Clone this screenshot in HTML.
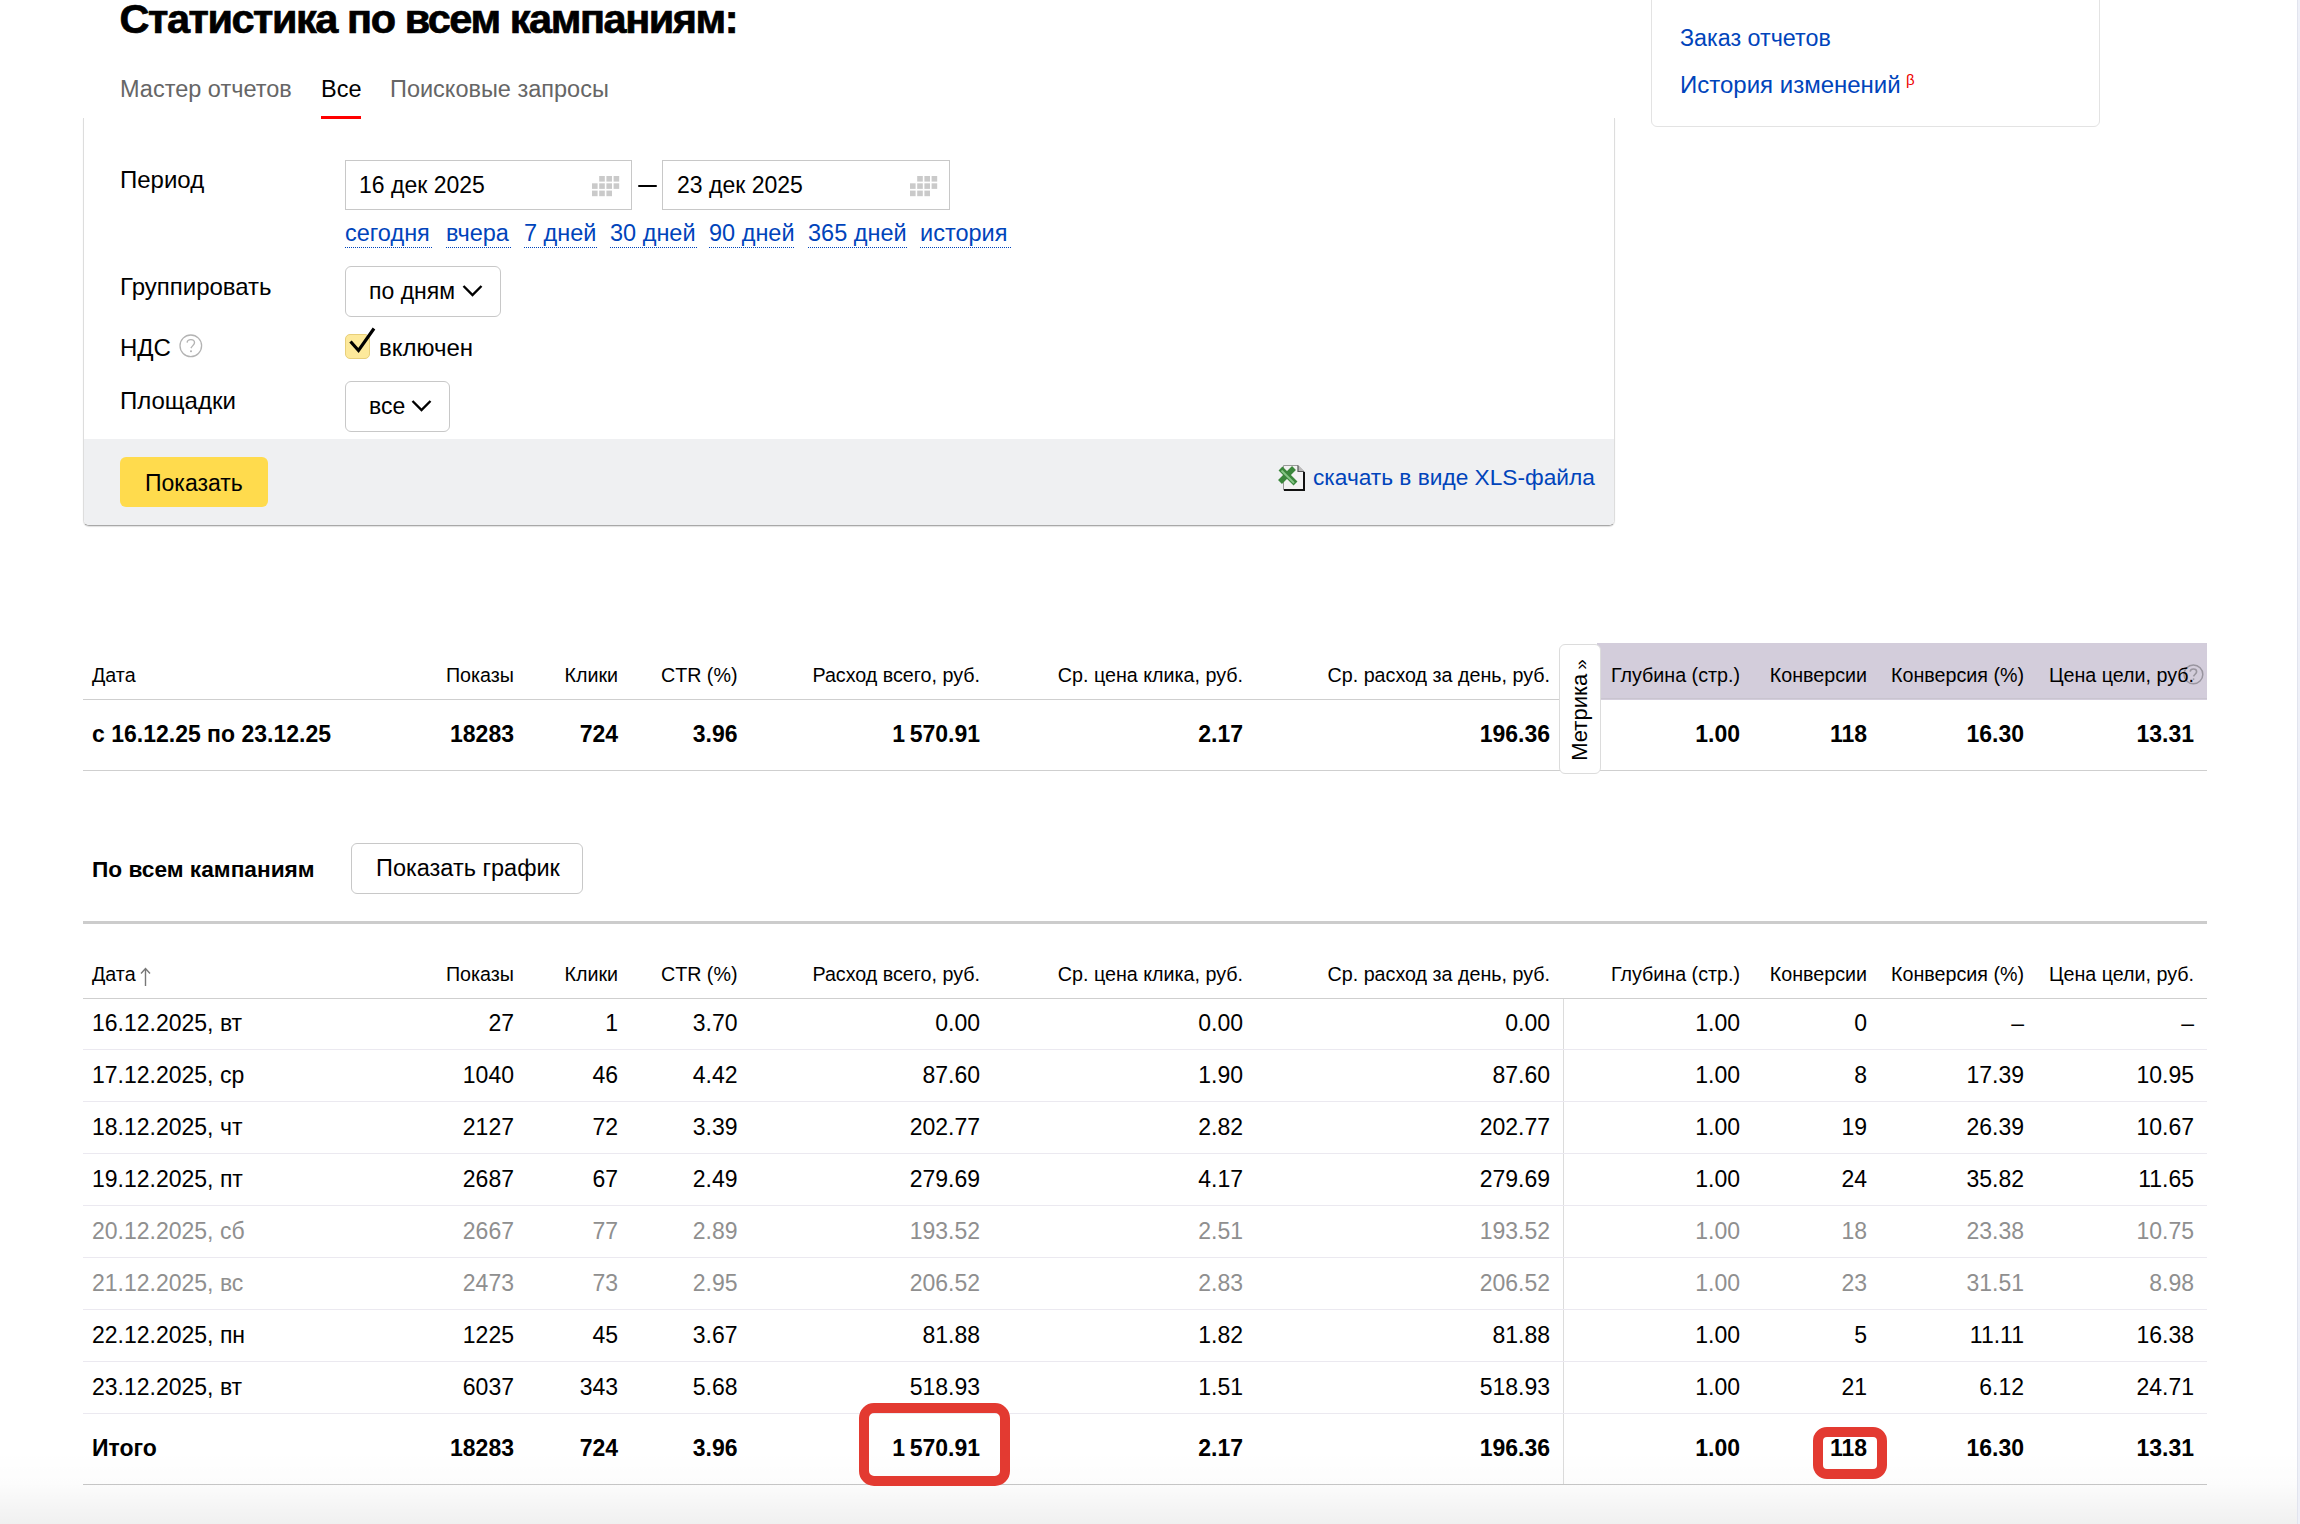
<!DOCTYPE html>
<html><head><meta charset="utf-8"><style>
html,body{margin:0;padding:0;background:#fff;}
body{width:2300px;height:1524px;position:relative;overflow:hidden;font-family:"Liberation Sans",sans-serif;color:#000;}
.t{position:absolute;white-space:nowrap;}
.b{position:absolute;}
</style></head><body>
<div class="t" style="top:-1.8px;font-size:41.5px;line-height:41.5px;left:119.5px;font-weight:bold;letter-spacing:-1.45px;-webkit-text-stroke:0.7px #000;">Статистика по всем кампаниям:</div>
<div class="t" style="top:77.9px;font-size:23.5px;line-height:23.5px;left:120px;color:#666;">Мастер отчетов</div>
<div class="t" style="top:77.9px;font-size:23.5px;line-height:23.5px;left:321px;">Все</div>
<div class="t" style="top:77.9px;font-size:23.5px;line-height:23.5px;left:390px;color:#666;">Поисковые запросы</div>
<div class="b" style="left:321px;top:116px;width:40px;height:3px;background:#f00;"></div>
<div class="b" style="left:1651px;top:-10px;width:449px;height:137px;border:1px solid #e3e3e3;border-radius:6px;box-sizing:border-box;background:#fff;"></div>
<div class="t" style="top:26.8px;font-size:23.3px;line-height:23.3px;left:1680px;color:#0044bb;">Заказ отчетов</div>
<div class="t" style="top:72.5px;font-size:24px;line-height:24px;left:1680px;color:#0044bb;">История изменений</div>
<div class="t" style="top:72.1px;font-size:15px;line-height:15px;left:1906px;color:#e00;">β</div>
<div class="b" style="left:83px;top:118px;width:1532px;height:408px;border-left:1px solid #ddd;border-right:1px solid #ddd;border-bottom:1px solid #a8a8a8;border-radius:0 0 6px 6px;box-sizing:border-box;box-shadow:0 1px 1px rgba(0,0,0,.12);"></div>
<div class="b" style="left:84px;top:439px;width:1530px;height:86px;background:#eff0f2;border-radius:0 0 5px 5px;"></div>
<div class="t" style="top:168.0px;font-size:24px;line-height:24px;left:120px;">Период</div>
<div class="b" style="left:345px;top:160px;width:287px;height:50px;border:1px solid #c8c8c8;box-sizing:border-box;background:#fff;"></div>
<div class="b" style="left:662px;top:160px;width:288px;height:50px;border:1px solid #c8c8c8;box-sizing:border-box;background:#fff;"></div>
<div class="t" style="top:174.3px;font-size:23px;line-height:23px;left:359px;">16 дек 2025</div>
<div class="t" style="top:174.3px;font-size:23px;line-height:23px;left:677px;">23 дек 2025</div>
<div class="b" style="left:638px;top:185px;width:19px;height:2px;background:#000;border-radius:1px;"></div>
<svg class="b" style="left:592px;top:176px" width="30" height="22"><rect x="7.2" y="0.0" width="5.6" height="5.6" fill="#cacaca"/><rect x="14.4" y="0.0" width="5.6" height="5.6" fill="#cacaca"/><rect x="21.6" y="0.0" width="5.6" height="5.6" fill="#cacaca"/><rect x="0.0" y="7.3" width="5.6" height="5.6" fill="#cacaca"/><rect x="7.2" y="7.3" width="5.6" height="5.6" fill="#cacaca"/><rect x="14.4" y="7.3" width="5.6" height="5.6" fill="#cacaca"/><rect x="21.6" y="7.3" width="5.6" height="5.6" fill="#cacaca"/><rect x="0.0" y="14.6" width="5.6" height="5.6" fill="#cacaca"/><rect x="7.2" y="14.6" width="5.6" height="5.6" fill="#cacaca"/><rect x="14.4" y="14.6" width="5.6" height="5.6" fill="#cacaca"/></svg>
<svg class="b" style="left:910px;top:176px" width="30" height="22"><rect x="7.2" y="0.0" width="5.6" height="5.6" fill="#cacaca"/><rect x="14.4" y="0.0" width="5.6" height="5.6" fill="#cacaca"/><rect x="21.6" y="0.0" width="5.6" height="5.6" fill="#cacaca"/><rect x="0.0" y="7.3" width="5.6" height="5.6" fill="#cacaca"/><rect x="7.2" y="7.3" width="5.6" height="5.6" fill="#cacaca"/><rect x="14.4" y="7.3" width="5.6" height="5.6" fill="#cacaca"/><rect x="21.6" y="7.3" width="5.6" height="5.6" fill="#cacaca"/><rect x="0.0" y="14.6" width="5.6" height="5.6" fill="#cacaca"/><rect x="7.2" y="14.6" width="5.6" height="5.6" fill="#cacaca"/><rect x="14.4" y="14.6" width="5.6" height="5.6" fill="#cacaca"/></svg>
<div class="t" style="top:221.7px;font-size:23.5px;line-height:23.5px;left:345px;color:#0044bb;">сегодня</div>
<div class="b" style="left:345px;top:247px;width:88px;height:1px;background-image:linear-gradient(90deg,#0044bb 50%,transparent 50%);background-size:2px 1px;background-repeat:repeat-x;"></div>
<div class="t" style="top:221.7px;font-size:23.5px;line-height:23.5px;left:446px;color:#0044bb;">вчера</div>
<div class="b" style="left:446px;top:247px;width:65px;height:1px;background-image:linear-gradient(90deg,#0044bb 50%,transparent 50%);background-size:2px 1px;background-repeat:repeat-x;"></div>
<div class="t" style="top:221.7px;font-size:23.5px;line-height:23.5px;left:524px;color:#0044bb;">7 дней</div>
<div class="b" style="left:524px;top:247px;width:73px;height:1px;background-image:linear-gradient(90deg,#0044bb 50%,transparent 50%);background-size:2px 1px;background-repeat:repeat-x;"></div>
<div class="t" style="top:221.7px;font-size:23.5px;line-height:23.5px;left:610px;color:#0044bb;">30 дней</div>
<div class="b" style="left:610px;top:247px;width:87px;height:1px;background-image:linear-gradient(90deg,#0044bb 50%,transparent 50%);background-size:2px 1px;background-repeat:repeat-x;"></div>
<div class="t" style="top:221.7px;font-size:23.5px;line-height:23.5px;left:709px;color:#0044bb;">90 дней</div>
<div class="b" style="left:709px;top:247px;width:86px;height:1px;background-image:linear-gradient(90deg,#0044bb 50%,transparent 50%);background-size:2px 1px;background-repeat:repeat-x;"></div>
<div class="t" style="top:221.7px;font-size:23.5px;line-height:23.5px;left:808px;color:#0044bb;">365 дней</div>
<div class="b" style="left:808px;top:247px;width:99px;height:1px;background-image:linear-gradient(90deg,#0044bb 50%,transparent 50%);background-size:2px 1px;background-repeat:repeat-x;"></div>
<div class="t" style="top:221.7px;font-size:23.5px;line-height:23.5px;left:920px;color:#0044bb;">история</div>
<div class="b" style="left:920px;top:247px;width:92px;height:1px;background-image:linear-gradient(90deg,#0044bb 50%,transparent 50%);background-size:2px 1px;background-repeat:repeat-x;"></div>
<div class="t" style="top:274.5px;font-size:24px;line-height:24px;left:120px;">Группировать</div>
<div class="b" style="left:345px;top:266px;width:156px;height:51px;border:1px solid #c8c8c8;border-radius:6px;box-sizing:border-box;background:#fff;"></div>
<div class="t" style="top:280.2px;font-size:23px;line-height:23px;left:369px;">по дням</div>
<svg class="b" style="left:462px;top:284px" width="22" height="14"><path d="M1.5 2 L10.5 11 L19.5 2" stroke="#000" stroke-width="2.4" fill="none"/></svg>
<div class="t" style="top:336.4px;font-size:24px;line-height:24px;left:120px;">НДС</div>
<svg class="b" style="left:177.60px;top:332.60px" width="25.60" height="25.60"><circle cx="12.80" cy="12.80" r="10.80" stroke="#b3b3b3" stroke-width="1.3" fill="none"/><path d="M9.10 9.60 C9.30 7.20 11.00 6.60 12.90 6.60 C15.10 6.60 16.50 7.90 16.50 9.70 C16.50 11.60 14.40 12.60 12.90 15.10" stroke="#b3b3b3" stroke-width="1.37" fill="none"/><circle cx="13.00" cy="18.20" r="1.05" fill="#b3b3b3"/></svg>
<div class="b" style="left:345px;top:334px;width:25px;height:25px;background:#fde99b;border:1px solid #e8cf7a;border-radius:5px;box-sizing:border-box;"></div>
<svg class="b" style="left:346px;top:325px" width="32" height="32"><path d="M4.5 16.5 L12.5 25.5 L28 3.5" stroke="#000" stroke-width="3.2" fill="none"/></svg>
<div class="t" style="top:335.9px;font-size:24px;line-height:24px;left:379px;">включен</div>
<div class="t" style="top:389.0px;font-size:24px;line-height:24px;left:120px;">Площадки</div>
<div class="b" style="left:345px;top:381px;width:105px;height:51px;border:1px solid #c8c8c8;border-radius:6px;box-sizing:border-box;background:#fff;"></div>
<div class="t" style="top:395.3px;font-size:23px;line-height:23px;left:369px;">все</div>
<svg class="b" style="left:411px;top:399px" width="22" height="14"><path d="M1.5 2 L10.5 11 L19.5 2" stroke="#000" stroke-width="2.4" fill="none"/></svg>
<div class="b" style="left:120px;top:457px;width:148px;height:50px;background:#ffdb4d;border-radius:6px;"></div>
<div class="t" style="top:471.6px;font-size:23px;line-height:23px;left:145px;">Показать</div>
<svg class="b" style="left:1277px;top:463px" width="30" height="30">
<path d="M6.5 2.5 H21 L27 8.5 V27 H6.5 Z" fill="#f2f2f2" stroke="#999" stroke-width="1"/>
<path d="M21 2.5 L21 8.5 L27 8.5" fill="#bbb" stroke="#555" stroke-width="1.2"/>
<path d="M7 27 H27 V9" stroke="#111" stroke-width="2" fill="none"/>
<path d="M3.5 5.5 L18.5 20.5" stroke="#3b873c" stroke-width="5.5"/>
<path d="M17 5 L3 19" stroke="#3b873c" stroke-width="5.5"/>
<path d="M4.5 7.5 L17 20" stroke="#86c686" stroke-width="1.8"/>
</svg>
<div class="t" style="top:465.7px;font-size:22.7px;line-height:22.7px;left:1313px;color:#0044bb;">скачать в виде XLS-файла</div>
<div class="b" style="left:1597px;top:643px;width:610px;height:57px;background:#d3cddb;"></div>
<div class="b" style="left:83px;top:699px;width:1476px;height:1px;background:#cfcfcf;"></div>
<div class="b" style="left:1597px;top:698px;width:610px;height:1px;background:#c9c4cf;"></div>
<div class="b" style="left:83px;top:770px;width:2124px;height:1px;background:#cfcfcf;"></div>
<svg class="b" style="left:2181.60px;top:662.90px" width="22.80" height="22.80"><circle cx="11.40" cy="11.40" r="9.40" stroke="#99959f" stroke-width="1.5" fill="none"/><path d="M8.18 8.61 C8.35 6.53 9.83 6.00 11.49 6.00 C13.40 6.00 14.62 7.14 14.62 8.70 C14.62 10.36 12.79 11.23 11.49 13.40" stroke="#99959f" stroke-width="1.58" fill="none"/><circle cx="11.57" cy="16.10" r="0.91" fill="#99959f"/></svg>
<div class="t" style="top:666.3px;font-size:19.7px;line-height:19.7px;left:92px;">Дата</div>
<div class="t" style="top:666.3px;font-size:19.7px;line-height:19.7px;right:1786px;">Показы</div>
<div class="t" style="top:666.3px;font-size:19.7px;line-height:19.7px;right:1682px;">Клики</div>
<div class="t" style="top:666.3px;font-size:19.7px;line-height:19.7px;right:1562.5px;">CTR (%)</div>
<div class="t" style="top:666.3px;font-size:19.7px;line-height:19.7px;right:1320px;">Расход всего, руб.</div>
<div class="t" style="top:666.3px;font-size:19.7px;line-height:19.7px;right:1057px;">Ср. цена клика, руб.</div>
<div class="t" style="top:666.3px;font-size:19.7px;line-height:19.7px;right:750px;">Ср. расход за день, руб.</div>
<div class="t" style="top:666.3px;font-size:19.7px;line-height:19.7px;right:560px;">Глубина (стр.)</div>
<div class="t" style="top:666.3px;font-size:19.7px;line-height:19.7px;right:433px;">Конверсии</div>
<div class="t" style="top:666.3px;font-size:19.7px;line-height:19.7px;right:276px;">Конверсия (%)</div>
<div class="t" style="top:666.3px;font-size:19.7px;line-height:19.7px;right:106px;">Цена цели, руб.</div>
<div class="t" style="top:722.9px;font-size:23px;line-height:23px;left:92px;font-weight:bold;">с 16.12.25 по 23.12.25</div>
<div class="t" style="top:722.9px;font-size:23px;line-height:23px;right:1786px;font-weight:bold;">18283</div>
<div class="t" style="top:722.9px;font-size:23px;line-height:23px;right:1682px;font-weight:bold;">724</div>
<div class="t" style="top:722.9px;font-size:23px;line-height:23px;right:1562.5px;font-weight:bold;">3.96</div>
<div class="t" style="top:722.9px;font-size:23px;line-height:23px;right:1320px;font-weight:bold;">1&#8239;570.91</div>
<div class="t" style="top:722.9px;font-size:23px;line-height:23px;right:1057px;font-weight:bold;">2.17</div>
<div class="t" style="top:722.9px;font-size:23px;line-height:23px;right:750px;font-weight:bold;">196.36</div>
<div class="t" style="top:722.9px;font-size:23px;line-height:23px;right:560px;font-weight:bold;">1.00</div>
<div class="t" style="top:722.9px;font-size:23px;line-height:23px;right:433px;font-weight:bold;">118</div>
<div class="t" style="top:722.9px;font-size:23px;line-height:23px;right:276px;font-weight:bold;">16.30</div>
<div class="t" style="top:722.9px;font-size:23px;line-height:23px;right:106px;font-weight:bold;">13.31</div>
<div class="b" style="left:1559px;top:644px;width:42px;height:130px;border:1px solid #dcdcdc;border-radius:6px;box-sizing:border-box;background:#fff;"></div>
<div class="t" style="left:1580px;top:710px;font-size:22px;line-height:22px;transform:translate(-50%,-50%) rotate(-90deg);">Метрика<span style="font-size:19px">&#8201;»</span></div>
<div class="t" style="top:857.9px;font-size:22.7px;line-height:22.7px;left:92px;font-weight:bold;">По всем кампаниям</div>
<div class="b" style="left:351px;top:843px;width:232px;height:51px;border:1px solid #c8c8c8;border-radius:6px;box-sizing:border-box;background:#fff;"></div>
<div class="t" style="top:857.2px;font-size:23.5px;line-height:23.5px;left:376px;">Показать график</div>
<div class="b" style="left:83px;top:921px;width:2124px;height:3px;background:#cccccc;"></div>
<div class="t" style="top:965.3px;font-size:19.7px;line-height:19.7px;left:92px;">Дата</div>
<svg class="b" style="left:139px;top:966px" width="14" height="22"><path d="M6.5 2.5 V20 M2 7.5 L6.5 2.5 L11 7.5" stroke="#777" stroke-width="1.4" fill="none"/></svg>
<div class="t" style="top:965.3px;font-size:19.7px;line-height:19.7px;right:1786px;">Показы</div>
<div class="t" style="top:965.3px;font-size:19.7px;line-height:19.7px;right:1682px;">Клики</div>
<div class="t" style="top:965.3px;font-size:19.7px;line-height:19.7px;right:1562.5px;">CTR (%)</div>
<div class="t" style="top:965.3px;font-size:19.7px;line-height:19.7px;right:1320px;">Расход всего, руб.</div>
<div class="t" style="top:965.3px;font-size:19.7px;line-height:19.7px;right:1057px;">Ср. цена клика, руб.</div>
<div class="t" style="top:965.3px;font-size:19.7px;line-height:19.7px;right:750px;">Ср. расход за день, руб.</div>
<div class="t" style="top:965.3px;font-size:19.7px;line-height:19.7px;right:560px;">Глубина (стр.)</div>
<div class="t" style="top:965.3px;font-size:19.7px;line-height:19.7px;right:433px;">Конверсии</div>
<div class="t" style="top:965.3px;font-size:19.7px;line-height:19.7px;right:276px;">Конверсия (%)</div>
<div class="t" style="top:965.3px;font-size:19.7px;line-height:19.7px;right:106px;">Цена цели, руб.</div>
<div class="b" style="left:83px;top:998px;width:2124px;height:1px;background:#cfcfcf;"></div>
<div class="b" style="left:1563px;top:999px;width:1px;height:485px;background:#dcdcdc;"></div>
<div class="t" style="top:1012.1px;font-size:23px;line-height:23px;left:92px;">16.12.2025, вт</div>
<div class="t" style="top:1012.1px;font-size:23px;line-height:23px;right:1786px;">27</div>
<div class="t" style="top:1012.1px;font-size:23px;line-height:23px;right:1682px;">1</div>
<div class="t" style="top:1012.1px;font-size:23px;line-height:23px;right:1562.5px;">3.70</div>
<div class="t" style="top:1012.1px;font-size:23px;line-height:23px;right:1320px;">0.00</div>
<div class="t" style="top:1012.1px;font-size:23px;line-height:23px;right:1057px;">0.00</div>
<div class="t" style="top:1012.1px;font-size:23px;line-height:23px;right:750px;">0.00</div>
<div class="t" style="top:1012.1px;font-size:23px;line-height:23px;right:560px;">1.00</div>
<div class="t" style="top:1012.1px;font-size:23px;line-height:23px;right:433px;">0</div>
<div class="t" style="top:1012.1px;font-size:23px;line-height:23px;right:276px;">–</div>
<div class="t" style="top:1012.1px;font-size:23px;line-height:23px;right:106px;">–</div>
<div class="b" style="left:83px;top:1049px;width:2124px;height:1px;background:#ebe9f0;"></div>
<div class="t" style="top:1064.1px;font-size:23px;line-height:23px;left:92px;">17.12.2025, ср</div>
<div class="t" style="top:1064.1px;font-size:23px;line-height:23px;right:1786px;">1040</div>
<div class="t" style="top:1064.1px;font-size:23px;line-height:23px;right:1682px;">46</div>
<div class="t" style="top:1064.1px;font-size:23px;line-height:23px;right:1562.5px;">4.42</div>
<div class="t" style="top:1064.1px;font-size:23px;line-height:23px;right:1320px;">87.60</div>
<div class="t" style="top:1064.1px;font-size:23px;line-height:23px;right:1057px;">1.90</div>
<div class="t" style="top:1064.1px;font-size:23px;line-height:23px;right:750px;">87.60</div>
<div class="t" style="top:1064.1px;font-size:23px;line-height:23px;right:560px;">1.00</div>
<div class="t" style="top:1064.1px;font-size:23px;line-height:23px;right:433px;">8</div>
<div class="t" style="top:1064.1px;font-size:23px;line-height:23px;right:276px;">17.39</div>
<div class="t" style="top:1064.1px;font-size:23px;line-height:23px;right:106px;">10.95</div>
<div class="b" style="left:83px;top:1101px;width:2124px;height:1px;background:#ebe9f0;"></div>
<div class="t" style="top:1116.1px;font-size:23px;line-height:23px;left:92px;">18.12.2025, чт</div>
<div class="t" style="top:1116.1px;font-size:23px;line-height:23px;right:1786px;">2127</div>
<div class="t" style="top:1116.1px;font-size:23px;line-height:23px;right:1682px;">72</div>
<div class="t" style="top:1116.1px;font-size:23px;line-height:23px;right:1562.5px;">3.39</div>
<div class="t" style="top:1116.1px;font-size:23px;line-height:23px;right:1320px;">202.77</div>
<div class="t" style="top:1116.1px;font-size:23px;line-height:23px;right:1057px;">2.82</div>
<div class="t" style="top:1116.1px;font-size:23px;line-height:23px;right:750px;">202.77</div>
<div class="t" style="top:1116.1px;font-size:23px;line-height:23px;right:560px;">1.00</div>
<div class="t" style="top:1116.1px;font-size:23px;line-height:23px;right:433px;">19</div>
<div class="t" style="top:1116.1px;font-size:23px;line-height:23px;right:276px;">26.39</div>
<div class="t" style="top:1116.1px;font-size:23px;line-height:23px;right:106px;">10.67</div>
<div class="b" style="left:83px;top:1153px;width:2124px;height:1px;background:#ebe9f0;"></div>
<div class="t" style="top:1168.1px;font-size:23px;line-height:23px;left:92px;">19.12.2025, пт</div>
<div class="t" style="top:1168.1px;font-size:23px;line-height:23px;right:1786px;">2687</div>
<div class="t" style="top:1168.1px;font-size:23px;line-height:23px;right:1682px;">67</div>
<div class="t" style="top:1168.1px;font-size:23px;line-height:23px;right:1562.5px;">2.49</div>
<div class="t" style="top:1168.1px;font-size:23px;line-height:23px;right:1320px;">279.69</div>
<div class="t" style="top:1168.1px;font-size:23px;line-height:23px;right:1057px;">4.17</div>
<div class="t" style="top:1168.1px;font-size:23px;line-height:23px;right:750px;">279.69</div>
<div class="t" style="top:1168.1px;font-size:23px;line-height:23px;right:560px;">1.00</div>
<div class="t" style="top:1168.1px;font-size:23px;line-height:23px;right:433px;">24</div>
<div class="t" style="top:1168.1px;font-size:23px;line-height:23px;right:276px;">35.82</div>
<div class="t" style="top:1168.1px;font-size:23px;line-height:23px;right:106px;">11.65</div>
<div class="b" style="left:83px;top:1205px;width:2124px;height:1px;background:#ebe9f0;"></div>
<div class="t" style="top:1220.1px;font-size:23px;line-height:23px;left:92px;color:#8f8f8f;">20.12.2025, сб</div>
<div class="t" style="top:1220.1px;font-size:23px;line-height:23px;right:1786px;color:#8f8f8f;">2667</div>
<div class="t" style="top:1220.1px;font-size:23px;line-height:23px;right:1682px;color:#8f8f8f;">77</div>
<div class="t" style="top:1220.1px;font-size:23px;line-height:23px;right:1562.5px;color:#8f8f8f;">2.89</div>
<div class="t" style="top:1220.1px;font-size:23px;line-height:23px;right:1320px;color:#8f8f8f;">193.52</div>
<div class="t" style="top:1220.1px;font-size:23px;line-height:23px;right:1057px;color:#8f8f8f;">2.51</div>
<div class="t" style="top:1220.1px;font-size:23px;line-height:23px;right:750px;color:#8f8f8f;">193.52</div>
<div class="t" style="top:1220.1px;font-size:23px;line-height:23px;right:560px;color:#8f8f8f;">1.00</div>
<div class="t" style="top:1220.1px;font-size:23px;line-height:23px;right:433px;color:#8f8f8f;">18</div>
<div class="t" style="top:1220.1px;font-size:23px;line-height:23px;right:276px;color:#8f8f8f;">23.38</div>
<div class="t" style="top:1220.1px;font-size:23px;line-height:23px;right:106px;color:#8f8f8f;">10.75</div>
<div class="b" style="left:83px;top:1257px;width:2124px;height:1px;background:#ebe9f0;"></div>
<div class="t" style="top:1272.1px;font-size:23px;line-height:23px;left:92px;color:#8f8f8f;">21.12.2025, вс</div>
<div class="t" style="top:1272.1px;font-size:23px;line-height:23px;right:1786px;color:#8f8f8f;">2473</div>
<div class="t" style="top:1272.1px;font-size:23px;line-height:23px;right:1682px;color:#8f8f8f;">73</div>
<div class="t" style="top:1272.1px;font-size:23px;line-height:23px;right:1562.5px;color:#8f8f8f;">2.95</div>
<div class="t" style="top:1272.1px;font-size:23px;line-height:23px;right:1320px;color:#8f8f8f;">206.52</div>
<div class="t" style="top:1272.1px;font-size:23px;line-height:23px;right:1057px;color:#8f8f8f;">2.83</div>
<div class="t" style="top:1272.1px;font-size:23px;line-height:23px;right:750px;color:#8f8f8f;">206.52</div>
<div class="t" style="top:1272.1px;font-size:23px;line-height:23px;right:560px;color:#8f8f8f;">1.00</div>
<div class="t" style="top:1272.1px;font-size:23px;line-height:23px;right:433px;color:#8f8f8f;">23</div>
<div class="t" style="top:1272.1px;font-size:23px;line-height:23px;right:276px;color:#8f8f8f;">31.51</div>
<div class="t" style="top:1272.1px;font-size:23px;line-height:23px;right:106px;color:#8f8f8f;">8.98</div>
<div class="b" style="left:83px;top:1309px;width:2124px;height:1px;background:#ebe9f0;"></div>
<div class="t" style="top:1324.1px;font-size:23px;line-height:23px;left:92px;">22.12.2025, пн</div>
<div class="t" style="top:1324.1px;font-size:23px;line-height:23px;right:1786px;">1225</div>
<div class="t" style="top:1324.1px;font-size:23px;line-height:23px;right:1682px;">45</div>
<div class="t" style="top:1324.1px;font-size:23px;line-height:23px;right:1562.5px;">3.67</div>
<div class="t" style="top:1324.1px;font-size:23px;line-height:23px;right:1320px;">81.88</div>
<div class="t" style="top:1324.1px;font-size:23px;line-height:23px;right:1057px;">1.82</div>
<div class="t" style="top:1324.1px;font-size:23px;line-height:23px;right:750px;">81.88</div>
<div class="t" style="top:1324.1px;font-size:23px;line-height:23px;right:560px;">1.00</div>
<div class="t" style="top:1324.1px;font-size:23px;line-height:23px;right:433px;">5</div>
<div class="t" style="top:1324.1px;font-size:23px;line-height:23px;right:276px;">11.11</div>
<div class="t" style="top:1324.1px;font-size:23px;line-height:23px;right:106px;">16.38</div>
<div class="b" style="left:83px;top:1361px;width:2124px;height:1px;background:#ebe9f0;"></div>
<div class="t" style="top:1376.1px;font-size:23px;line-height:23px;left:92px;">23.12.2025, вт</div>
<div class="t" style="top:1376.1px;font-size:23px;line-height:23px;right:1786px;">6037</div>
<div class="t" style="top:1376.1px;font-size:23px;line-height:23px;right:1682px;">343</div>
<div class="t" style="top:1376.1px;font-size:23px;line-height:23px;right:1562.5px;">5.68</div>
<div class="t" style="top:1376.1px;font-size:23px;line-height:23px;right:1320px;">518.93</div>
<div class="t" style="top:1376.1px;font-size:23px;line-height:23px;right:1057px;">1.51</div>
<div class="t" style="top:1376.1px;font-size:23px;line-height:23px;right:750px;">518.93</div>
<div class="t" style="top:1376.1px;font-size:23px;line-height:23px;right:560px;">1.00</div>
<div class="t" style="top:1376.1px;font-size:23px;line-height:23px;right:433px;">21</div>
<div class="t" style="top:1376.1px;font-size:23px;line-height:23px;right:276px;">6.12</div>
<div class="t" style="top:1376.1px;font-size:23px;line-height:23px;right:106px;">24.71</div>
<div class="b" style="left:83px;top:1413px;width:2124px;height:1px;background:#ebe9f0;"></div>
<div class="t" style="top:1437.1px;font-size:23px;line-height:23px;left:92px;font-weight:bold;">Итого</div>
<div class="t" style="top:1437.1px;font-size:23px;line-height:23px;right:1786px;font-weight:bold;">18283</div>
<div class="t" style="top:1437.1px;font-size:23px;line-height:23px;right:1682px;font-weight:bold;">724</div>
<div class="t" style="top:1437.1px;font-size:23px;line-height:23px;right:1562.5px;font-weight:bold;">3.96</div>
<div class="t" style="top:1437.1px;font-size:23px;line-height:23px;right:1320px;font-weight:bold;">1&#8239;570.91</div>
<div class="t" style="top:1437.1px;font-size:23px;line-height:23px;right:1057px;font-weight:bold;">2.17</div>
<div class="t" style="top:1437.1px;font-size:23px;line-height:23px;right:750px;font-weight:bold;">196.36</div>
<div class="t" style="top:1437.1px;font-size:23px;line-height:23px;right:560px;font-weight:bold;">1.00</div>
<div class="t" style="top:1437.1px;font-size:23px;line-height:23px;right:433px;font-weight:bold;">118</div>
<div class="t" style="top:1437.1px;font-size:23px;line-height:23px;right:276px;font-weight:bold;">16.30</div>
<div class="t" style="top:1437.1px;font-size:23px;line-height:23px;right:106px;font-weight:bold;">13.31</div>
<div class="b" style="left:83px;top:1484px;width:2124px;height:1px;background:#c8c8c8;"></div>
<div class="b" style="left:0px;top:1450px;width:2300px;height:74px;background:linear-gradient(180deg,rgba(0,0,0,0) 0%,rgba(0,0,0,.012) 45%,rgba(0,0,0,.058) 100%);pointer-events:none;"></div>
<div class="b" style="left:859px;top:1403px;width:151px;height:83px;border:10px solid #e33a31;border-radius:15px;box-sizing:border-box;"></div>
<div class="b" style="left:1813px;top:1427px;width:74px;height:52px;border:10px solid #e33a31;border-radius:14px;box-sizing:border-box;"></div>
<div class="b" style="left:2297px;top:0px;width:3px;height:1524px;background:#eef0f8;border-left:1px solid #e2e4ee;box-sizing:border-box;"></div>
</body></html>
